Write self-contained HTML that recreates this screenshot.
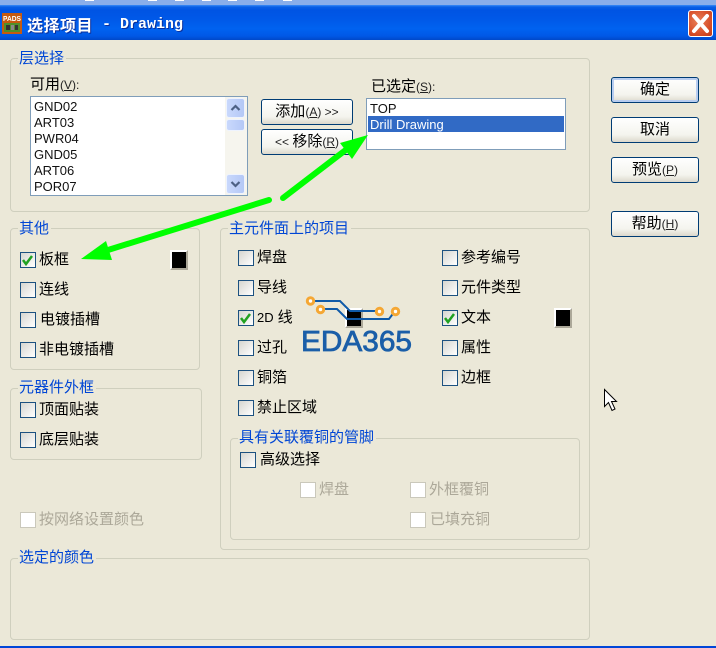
<!DOCTYPE html>
<html><head><meta charset="utf-8"><style>
html,body{margin:0;padding:0}
body{width:716px;height:648px;overflow:hidden;position:relative;background:#ebe8d8;font-family:"WenQuanYi Zen Hei","Noto Sans CJK SC","Liberation Sans",sans-serif;font-size:15px;color:#000}
div,span.a{position:absolute}
.g{border:1px solid #cfcfbe;border-radius:4px;box-sizing:border-box}
.t{white-space:nowrap;line-height:18px;height:18px}
.gt{color:#0046d5;background:#ebe8d8;padding:0 2px 0 1px;margin-left:-1px}
.c{width:16px;height:16px;box-sizing:border-box;border:1px solid #1c5180;background:linear-gradient(135deg,#d6d6d0,#fff)}
.d{width:16px;height:16px;box-sizing:border-box;border:1px solid #cac8bb;background:#fff}
.dt{color:#aca899}
.l{font-family:"Liberation Sans",sans-serif}
u{text-decoration:underline}
.k{font-family:"Liberation Sans",sans-serif;font-size:12px;color:#222}
.b{box-sizing:border-box;border:1px solid #003c74;border-radius:3px;background:linear-gradient(#fff,#f4f4ee 70%,#dcd8cc);text-align:center;line-height:22px;white-space:nowrap}
.sw{width:18px;height:20px;box-sizing:border-box;border:2px solid;border-color:#fff #aca899 #aca899 #fff;background:#000}
.r{font-family:"Liberation Sans",sans-serif;font-size:13px;line-height:16px;height:16px;color:#111;white-space:nowrap}
.sb{width:19px;box-sizing:border-box;border:1px solid #eef3fe;border-radius:3px;background:linear-gradient(90deg,#c9d8fc,#b4c8f6)}
svg{position:absolute}
</style></head><body>
<div style="left:0;top:0;width:716px;height:5px;background:#8aaeea"></div>
<div style="left:85px;top:0;width:9px;height:1px;background:#fff"></div>
<div style="left:148px;top:0;width:9px;height:1px;background:#fff"></div>
<div style="left:175px;top:0;width:9px;height:1px;background:#fff"></div>
<div style="left:202px;top:0;width:9px;height:1px;background:#fff"></div>
<div style="left:228px;top:0;width:9px;height:1px;background:#fff"></div>
<div style="left:255px;top:0;width:9px;height:1px;background:#fff"></div>
<div style="left:283px;top:0;width:9px;height:1px;background:#fff"></div>
<div style="left:0;top:5px;width:716px;height:35px;background:linear-gradient(#3c8cf8 0,#0a5fe6 2px,#0054e3 5px,#0058e8 14px,#0062f0 24px,#0058e6 31px,#0048c8 35px)"></div>
<svg style="left:2px;top:13px" width="20" height="21" viewBox="0 0 20 21"><rect width="20" height="21" fill="#c55a10"/><rect x="2" y="10" width="16" height="9" fill="#4f8f2a"/><rect x="4" y="12" width="4" height="5" fill="#333"/><rect x="9" y="12" width="3" height="5" fill="#888"/><rect x="13" y="12" width="3" height="5" fill="#333"/><text x="1" y="8" font-family="Liberation Sans" font-size="7.5" font-weight="bold" fill="#fff" textLength="18" lengthAdjust="spacingAndGlyphs">PADS</text></svg>
<div class="t" style="left:27px;top:14px;color:#fff;font-size:16px;line-height:20px;height:20px;letter-spacing:.5px;font-weight:bold;text-shadow:1px 1px 0 #0a2f9c">选择项目</div>
<div class="t" style="left:93px;top:15px;color:#fff;font-family:'Liberation Mono',monospace;font-size:15px;line-height:20px;height:20px;font-weight:bold;white-space:pre;text-shadow:1px 1px 0 #0a2f9c"> - Drawing</div>
<div style="left:688px;top:10px;width:25px;height:27px;box-sizing:border-box;border:1px solid #fff;border-radius:3px;background:radial-gradient(circle at 40% 40%,#e8805a,#d8502a 60%,#c03a18)"></div>
<svg style="left:688px;top:10px" width="25" height="27"><path d="M6 6L19 21M19 6L6 21" stroke="#fff" stroke-width="4" stroke-linecap="round" fill="none"/></svg>

<div class="g" style="left:10px;top:58px;width:580px;height:154px"></div>
<div class="t gt" style="left:19px;top:49px">层选择</div>
<div class="t" style="left:30px;top:75px">可用<span class="k">(<u>V</u>):</span></div>
<div style="left:30px;top:96px;width:218px;height:100px;box-sizing:border-box;border:1px solid #7f9db9;background:#fff"></div>
<div class="r" style="left:34px;top:99px">GND02</div>
<div class="r" style="left:34px;top:115px">ART03</div>
<div class="r" style="left:34px;top:131px">PWR04</div>
<div class="r" style="left:34px;top:147px">GND05</div>
<div class="r" style="left:34px;top:163px">ART06</div>
<div class="r" style="left:34px;top:179px">POR07</div>
<div style="left:225px;top:97px;width:22px;height:98px;background:#f6f5ee"></div>
<div class="sb" style="left:226px;top:98px;height:20px"></div>
<div class="sb" style="left:226px;top:119px;height:12px"></div>
<div class="sb" style="left:226px;top:174px;height:20px"></div>
<svg style="left:226px;top:98px" width="19" height="96"><path d="M5.500 12L9.500 8L13.500 12M5.500 84L9.500 88L13.500 84" stroke="#4d6185" stroke-width="2.200" fill="none"/></svg>

<div class="b" style="left:261px;top:99px;width:92px;height:26px">添加<span class="k">(<u>A</u>) &gt;&gt;</span></div>
<div class="b" style="left:261px;top:129px;width:92px;height:26px"><span class="k">&lt;&lt;</span> 移除<span class="k">(<u>R</u>)</span></div>

<div class="t" style="left:371px;top:77px">已选定<span class="k">(<u>S</u>):</span></div>
<div style="left:366px;top:98px;width:200px;height:52px;box-sizing:border-box;border:1px solid #7f9db9;background:#fff"></div>
<div class="r" style="left:370px;top:101px">TOP</div>
<div style="left:368px;top:116px;width:196px;height:16px;background:#316ac5"></div>
<div class="r" style="left:370px;top:117px;color:#fff">Drill Drawing</div>

<div class="b" style="left:611px;top:77px;width:88px;height:26px;box-shadow:inset 0 0 0 2px #b8cdf0">确定</div>
<div class="b" style="left:611px;top:117px;width:88px;height:26px">取消</div>
<div class="b" style="left:611px;top:157px;width:88px;height:26px">预览<span class="k">(<u>P</u>)</span></div>
<div class="b" style="left:611px;top:211px;width:88px;height:26px">帮助<span class="k">(<u>H</u>)</span></div>

<div class="g" style="left:10px;top:228px;width:190px;height:142px"></div>
<div class="t gt" style="left:19px;top:219px">其他</div>
<div class="c" style="left:20px;top:252px"></div><div class="t" style="left:39px;top:250px">板框</div>
<div class="sw" style="left:170px;top:250px"></div>
<div class="c" style="left:20px;top:282px"></div><div class="t" style="left:39px;top:280px">连线</div>
<div class="c" style="left:20px;top:312px"></div><div class="t" style="left:40px;top:310px">电镀插槽</div>
<div class="c" style="left:20px;top:342px"></div><div class="t" style="left:39px;top:340px">非电镀插槽</div>

<div class="g" style="left:10px;top:388px;width:192px;height:72px"></div>
<div class="t gt" style="left:19px;top:378px">元器件外框</div>
<div class="c" style="left:20px;top:402px"></div><div class="t" style="left:39px;top:400px">顶面贴装</div>
<div class="c" style="left:20px;top:432px"></div><div class="t" style="left:39px;top:430px">底层贴装</div>

<div class="d" style="left:20px;top:512px"></div><div class="t dt" style="left:39px;top:510px">按网络设置颜色</div>

<div class="g" style="left:220px;top:228px;width:370px;height:322px"></div>
<div class="t gt" style="left:229px;top:219px">主元件面上的项目</div>
<div class="c" style="left:238px;top:250px"></div><div class="t" style="left:257px;top:248px">焊盘</div>
<div class="c" style="left:238px;top:280px"></div><div class="t" style="left:257px;top:278px">导线</div>
<div class="c" style="left:238px;top:310px"></div><div class="t" style="left:257px;top:308px"><span class="l" style="font-size:13px;margin-right:4px">2D</span>线</div>
<div class="c" style="left:238px;top:340px"></div><div class="t" style="left:257px;top:338px">过孔</div>
<div class="c" style="left:238px;top:370px"></div><div class="t" style="left:257px;top:368px">铜箔</div>
<div class="c" style="left:238px;top:400px"></div><div class="t" style="left:257px;top:398px">禁止区域</div>
<div class="c" style="left:442px;top:250px"></div><div class="t" style="left:461px;top:248px">参考编号</div>
<div class="c" style="left:442px;top:280px"></div><div class="t" style="left:461px;top:278px">元件类型</div>
<div class="c" style="left:442px;top:310px"></div><div class="t" style="left:461px;top:308px">文本</div>
<div class="sw" style="left:554px;top:308px"></div>
<div class="c" style="left:442px;top:340px"></div><div class="t" style="left:461px;top:338px">属性</div>
<div class="c" style="left:442px;top:370px"></div><div class="t" style="left:461px;top:368px">边框</div>

<div class="g" style="left:230px;top:438px;width:350px;height:102px"></div>
<div class="t gt" style="left:239px;top:428px">具有关联覆铜的管脚</div>
<div class="c" style="left:240px;top:452px"></div><div class="t" style="left:260px;top:450px">高级选择</div>
<div class="d" style="left:300px;top:482px"></div><div class="t dt" style="left:319px;top:480px">焊盘</div>
<div class="d" style="left:410px;top:482px"></div><div class="t dt" style="left:429px;top:480px">外框覆铜</div>
<div class="d" style="left:410px;top:512px"></div><div class="t dt" style="left:430px;top:510px">已填充铜</div>

<div class="g" style="left:10px;top:558px;width:580px;height:82px"></div>
<div class="t gt" style="left:19px;top:548px">选定的颜色</div>

<div class="sw" style="left:345px;top:308px"></div>
<svg style="left:0;top:0" width="716" height="648">
<path d="M23 260l3 4 6-8" stroke="#21a121" stroke-width="2.500" fill="none"/>
<path d="M241 318l3 4 6-8" stroke="#21a121" stroke-width="2.500" fill="none"/>
<path d="M445 318l3 4 6-8" stroke="#21a121" stroke-width="2.500" fill="none"/>
<path d="M311 301H340L350 311H379M320 309H337L347 319H389L395 311" stroke="#0f5aa8" stroke-width="2" fill="none"/>
<g fill="#fff" stroke="#f5a733" stroke-width="3"><circle cx="310.500" cy="301" r="3.200"/><circle cx="320.500" cy="309.500" r="3.200"/><circle cx="379.500" cy="311.500" r="3.200"/><circle cx="395.500" cy="311.500" r="3.200"/></g>
<text x="301" y="351" font-family="Liberation Sans" font-size="29" fill="#1a5ea8" stroke="#1a5ea8" stroke-width=".8" textLength="111" lengthAdjust="spacingAndGlyphs">EDA365</text>
<path d="M283 198L347 149" stroke="#00ff00" stroke-width="6" stroke-linecap="round"/>
<path d="M368 135L340 143L352 159Z" fill="#00ff00"/>
<path d="M269 200L108 250" stroke="#00ff00" stroke-width="6" stroke-linecap="round"/>
<path d="M81 259L106 241L112 260Z" fill="#00ff00"/>
<path d="M604.500 389.500V406.500L608.500 402.500L612 410.500L615 409L611.500 401.500H616.500Z" fill="#fff" stroke="#000" stroke-width="1"/>
</svg>
<div style="left:0;top:646px;width:716px;height:2px;background:#0046d8"></div>
</body></html>
